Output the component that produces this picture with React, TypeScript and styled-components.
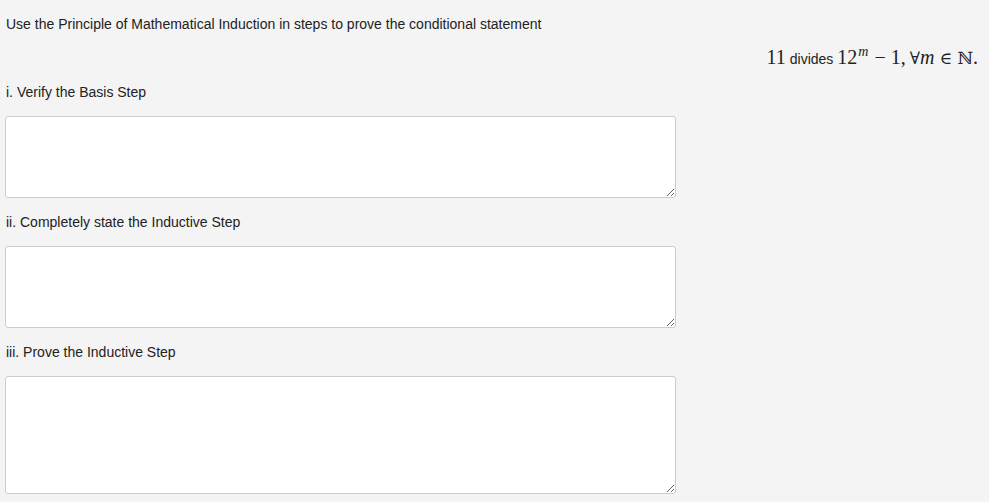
import React from 'react';
import styled, { createGlobalStyle } from 'styled-components';

const GlobalStyle = createGlobalStyle`
  html, body {
    margin: 0;
    padding: 0;
    background: #f4f4f4;
  }
  body {
    font-family: Arial, "Liberation Sans", sans-serif;
    color: #222;
  }
`;

const Page = styled.div`
  width: 989px;
  height: 502px;
  box-sizing: border-box;
  padding: 16px 5px 0 5px;
  overflow: hidden;
`;

const Intro = styled.p`
  margin: 0 0 0 1px;
  font-size: 14px;
  line-height: 16px;
`;

const MathLine = styled.div`
  text-align: right;
  height: 24px;
  margin: 13px 6px 0 0;
  font-family: "Liberation Serif", "DejaVu Serif", serif;
  font-size: 20px;
  line-height: 24px;
  color: #222;
  white-space: nowrap;
`;

const Word = styled.span`
  font-family: Arial, "Liberation Sans", sans-serif;
  font-size: 14px;
  margin: 0 4px 0 4px;
`;

const Italic = styled.span`
  font-style: italic;
`;

const Sup = styled.span`
  position: relative;
  top: -8px;
  font-style: italic;
  font-size: 14px;
  margin: 0 6px 0 1px;
`;

const Symbol = styled.span`
  font-family: "DejaVu Serif", serif;
  font-size: 17px;
`;

const Steps = styled.div`
  display: flex;
  flex-direction: column;
  margin-top: 15px;
`;

const Step = styled.div`
  display: flex;
  flex-direction: column;
  margin-bottom: 16px;
`;

const Label = styled.label`
  font-size: 14px;
  line-height: 16px;
  margin: 0 0 16px 1px;
`;

const Answer = styled.textarea<{ $h: number }>`
  width: 671px;
  height: ${p => p.$h}px;
  box-sizing: border-box;
  border: 1px solid #cccccc;
  border-radius: 3px;
  background: #fff;
  resize: vertical;
  margin: 0;
  padding: 6px;
  font-family: Arial, "Liberation Sans", sans-serif;
  font-size: 14px;
`;

const steps = [
  { label: 'i. Verify the Basis Step', h: 82 },
  { label: 'ii. Completely state the Inductive Step', h: 82 },
  { label: 'iii. Prove the Inductive Step', h: 118 },
];

const App: React.FC = () => {
  return (
    <Page>
      <GlobalStyle />
      <Intro>Use the Principle of Mathematical Induction in steps to prove the conditional statement</Intro>
      <MathLine>
        <span>11</span>
        <Word>divides</Word>
        <span>12</span>
        <Sup>m</Sup>
        <span>− 1,&thinsp;</span>
        <Symbol>∀</Symbol>
        <Italic>m</Italic>
        <span>&nbsp;</span>
        <Symbol>∈ ℕ</Symbol>
        <span>.</span>
      </MathLine>
      <Steps>
        {steps.map(s => (
          <Step key={s.label}>
            <Label>{s.label}</Label>
            <Answer $h={s.h} />
          </Step>
        ))}
      </Steps>
    </Page>
  );
};

export default App;
